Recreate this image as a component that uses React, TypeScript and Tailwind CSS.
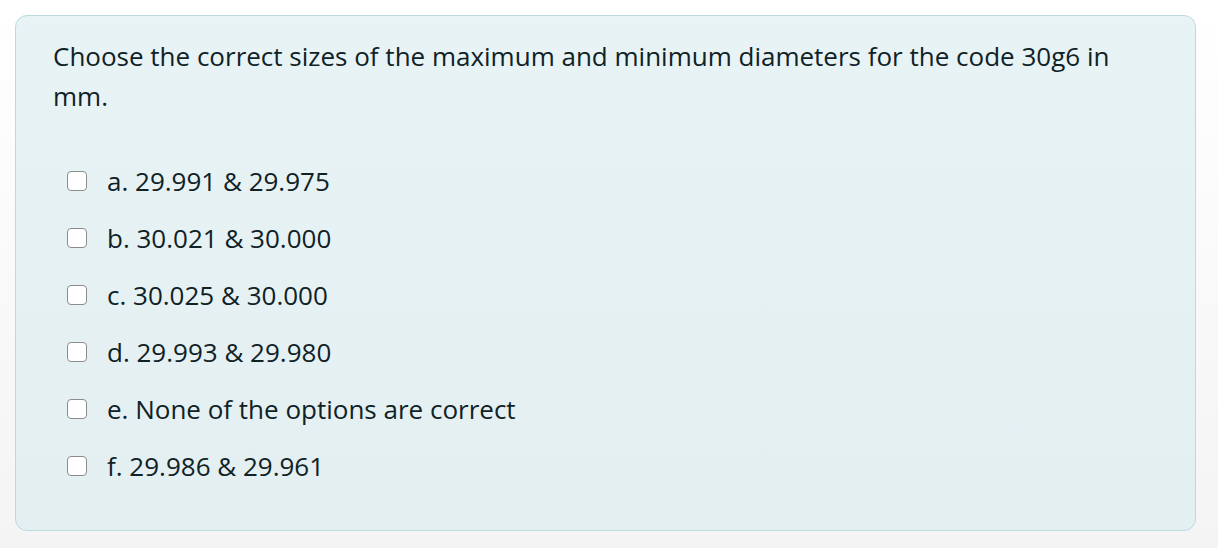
const options = [
  'a. 29.991 & 29.975',
  'b. 30.021 & 30.000',
  'c. 30.025 & 30.000',
  'd. 29.993 & 29.980',
  'e. None of the options are correct',
  'f. 29.986 & 29.961',
];

export default function App() {
  return (
    <div
      className="min-h-[548px] w-full bg-gradient-to-b from-white to-[#f4f4f4] pl-[15px] pr-[22px] pt-[15px] pb-[16px]"
      style={{ fontFamily: '"Open Sans", "Noto Sans", sans-serif' }}
    >
      <div className="rounded-[12px] border border-[#bcd9df] bg-gradient-to-b from-[#e8f3f6] to-[#e4eff2] pl-[37px] pr-[56px] pt-[20px] pb-[44px] text-[#0f2226]">
        <p className="text-[26px] leading-[40px]">
          Choose the correct sizes of the maximum and minimum diameters for the code 30g6 in mm.
        </p>
        <div className="mt-[45px] flex flex-col gap-[17px] pl-[14px]">
          {options.map((opt) => (
            <label key={opt} className="flex h-[40px] items-center gap-[20px] text-[26px]">
              <span className="h-[20px] w-[20px] shrink-0 rounded-[4px] border-[1.5px] border-[#8c8c8c] bg-white" />
              <span>{opt}</span>
            </label>
          ))}
        </div>
      </div>
    </div>
  );
}
